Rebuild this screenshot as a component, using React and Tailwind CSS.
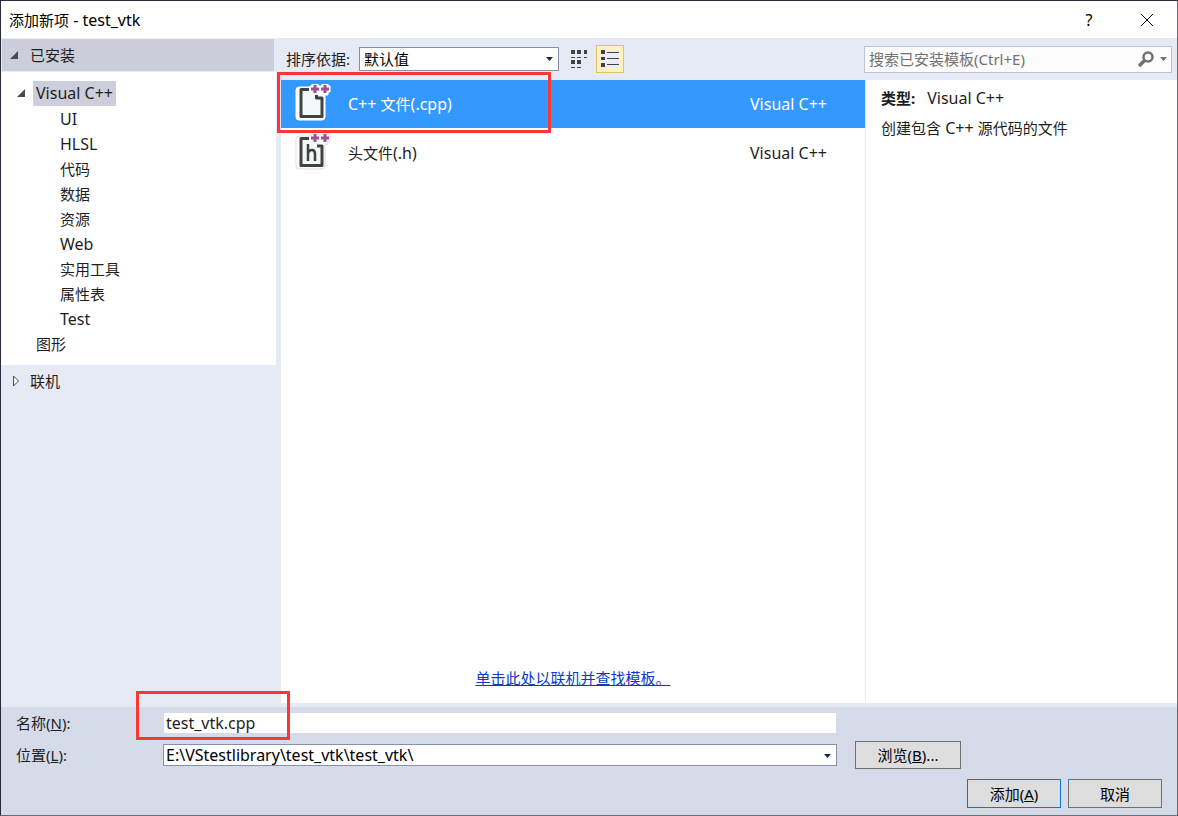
import React, { useState } from "react";

const categories = [
  "UI",
  "HLSL",
  "代码",
  "数据",
  "资源",
  "Web",
  "实用工具",
  "属性表",
  "Test",
];

const templates = [
  { id: "cpp", name: "C++ 文件(.cpp)", language: "Visual C++" },
  { id: "h", name: "头文件(.h)", language: "Visual C++" },
];

// Latin runs are set one size larger than the Chinese text around them
function Mixed({ children }) {
  return children.split(/([\x20-\x7e]+)/).map((part, i) =>
    i % 2 ? (
      <span key={i} className="text-[16px]">
        {part}
      </span>
    ) : (
      part
    )
  );
}

function ExpandedArrow() {
  return (
    <svg className="size-2 shrink-0" viewBox="0 0 8 8">
      <path d="M8 0V8H0Z" fill="#4a4a4e" />
    </svg>
  );
}

function DownArrow({ className }) {
  return (
    <svg className={className} viewBox="0 0 7 4">
      <path d="M0 0H7L3.5 4Z" fill="currentColor" />
    </svg>
  );
}

function FileIcon({ header }) {
  return (
    <svg className="h-10 w-9 shrink-0" viewBox="0 0 36 40">
      {/* light halo around the page and the plus signs */}
      <path
        d="M4 3H15V2H17V0H23V2H27V0H33V2H35V8H33V11H30V33Q30 36 27 36H4Q1 36 1 33V6Q1 3 4 3Z"
        fill="#fff"
        stroke={header ? "#dedede" : "#fff"}
      />
      <path d="M6 6H18L27 13V32H6Z" fill="#f4f7f7" />
      <path
        d={header ? "M14 5.5H6V32.5H27V13H22" : "M14 5.5H6V32.5H27V14H21.5V11"}
        fill="none"
        stroke="#424242"
        strokeWidth="3"
        strokeLinejoin="round"
      />
      {header && (
        <path
          d="M13 11V28M13 20Q14 17 17 17Q20 17 20 21V28"
          fill="none"
          stroke="#424242"
          strokeWidth="2.5"
        />
      )}
      <path
        d="M20 1V9M16 5H24M30 1V9M26 5H34"
        stroke="#9b4f96"
        strokeWidth="3"
      />
    </svg>
  );
}

export default function App() {
  const [selected, setSelected] = useState("cpp");
  const [fileName, setFileName] = useState("test_vtk.cpp");

  return (
    <div
      className="flex min-h-screen flex-col border border-[#6b6b70] border-t-[#292a3a] border-l-[#292a3a] bg-[#e6eaf5] text-[15px] leading-5 text-[#1e1e1e]"
      style={{ fontFamily: '"Noto Sans", "Noto Sans CJK SC", sans-serif' }}
    >
      {/* Title bar */}
      <header className="flex h-[37px] items-center justify-between bg-white pl-2 text-black">
        <h1>
          <Mixed>添加新项 - test_vtk</Mixed>
        </h1>
        <div className="flex">
          <button type="button" aria-label="帮助" className="w-14 text-base">
            ?
          </button>
          <button
            type="button"
            aria-label="关闭"
            className="flex w-[60px] items-center justify-center"
          >
            <svg className="size-3" viewBox="0 0 12 12">
              <path d="M0 0L12 12M12 0L0 12" stroke="#000" fill="none" />
            </svg>
          </button>
        </div>
      </header>

      <div className="flex flex-1">
        {/* Category tree */}
        <nav className="w-[280px] shrink-0 pr-[5px]">
          <button
            type="button"
            className="mt-px ml-px flex h-8 w-[272px] items-center gap-3 bg-[#cccedb] pl-2"
          >
            <ExpandedArrow />
            已安装
          </button>
          <div className="mt-px bg-white pt-2 pb-[9px]">
            <button type="button" className="flex h-[26px] items-center gap-2 pl-4">
              <ExpandedArrow />
              <span className="h-[25px] bg-[#cccedb] px-[3px] text-[16px] leading-[25px]">
                Visual C++
              </span>
            </button>
            <ul>
              {categories.map((category) => (
                <li key={category}>
                  <button type="button" className="block h-[25px] pl-[59px]">
                    <Mixed>{category}</Mixed>
                  </button>
                </li>
              ))}
            </ul>
            <button type="button" className="block h-[25px] pl-[35px]">
              图形
            </button>
          </div>
          <button type="button" className="flex h-8 items-center gap-[11px] pl-3">
            <svg className="h-3 w-[6px]" viewBox="0 0 6 12">
              <path d="M.5 1V11L5.5 6Z" fill="#fff" stroke="#4a4a4e" />
            </svg>
            联机
          </button>
        </nav>

        <div className="flex min-w-0 flex-1 flex-col pb-1">
          {/* Toolbar */}
          <div className="flex h-[42px] items-center pr-[5px] pl-[5px]">
            <label htmlFor="sort" className="w-[73px]">
              排序依据:
            </label>
            <div className="relative w-[200px]">
              <select
                id="sort"
                className="block h-6 w-full appearance-none border border-[#8591a9] bg-white pl-1 text-black"
              >
                <option>默认值</option>
              </select>
              <DownArrow className="pointer-events-none absolute top-[10px] right-[6px] h-1 w-[7px] text-[#1b293e]" />
            </div>
            <button
              type="button"
              aria-label="小图标"
              className="ml-1.5 flex size-7 items-center justify-center"
            >
              <svg className="size-[18px]" viewBox="0 0 18 18" fill="#424242">
                <path d="M1 0H5V4H1ZM7 0H11V4H7ZM14 0H17V4H14ZM1 7H5V8H1ZM7 7H11V8H7ZM14 7H17V8H14ZM1 10H5V14H1ZM7 10H11V14H7ZM1 17H5V18H1ZM7 17H11V18H7Z" />
              </svg>
            </button>
            <button
              type="button"
              aria-label="列表"
              className="ml-[3px] flex size-7 items-center justify-center border border-[#e5c365] bg-[#fff2be]"
            >
              <svg className="size-[18px]" viewBox="0 0 18 18" fill="#424242">
                <path d="M0 0H18V18H0Z" fill="#e9ecf2" />
                <path d="M0 0H4V4H0ZM6 2H18V3H6ZM0 7H4V10H0ZM6 8H18V9H6ZM0 13H4V17H0ZM6 14H18V15H6Z" />
              </svg>
            </button>
            <div className="ml-auto flex h-[27px] w-[308px] items-center border border-[#bdc4d6] bg-[#fcfcfc] pl-1">
              <input
                type="text"
                aria-label="搜索已安装模板"
                placeholder="搜索已安装模板(Ctrl+E)"
                className="min-w-0 flex-1 outline-none placeholder:text-[#717171]"
              />
              <button
                type="button"
                aria-label="搜索"
                className="mr-1 flex items-center gap-1.5 text-[#717171]"
              >
                <svg className="size-4" viewBox="0 0 16 16" fill="none" stroke="currentColor">
                  <circle cx="10" cy="6" r="4.5" strokeWidth="2.5" />
                  <path d="M7 9L1 15" strokeWidth="3.5" />
                </svg>
                <DownArrow className="h-1 w-[7px]" />
              </button>
            </div>
          </div>

          <div className="flex flex-1 bg-white">
            {/* Templates */}
            <main className="relative flex min-w-0 flex-1 flex-col gap-px">
              {templates.map((template) => (
                <button
                  key={template.id}
                  type="button"
                  onClick={() => setSelected(template.id)}
                  className={`flex h-12 items-center pl-[14px] text-left ${
                    selected === template.id ? "bg-[#3399ff] text-white" : ""
                  }`}
                >
                  <FileIcon header={template.id === "h"} />
                  <span className="ml-[17px] flex-1">
                    <Mixed>{template.name}</Mixed>
                  </span>
                  <span className="w-[115px] text-[16px]">
                    {template.language}
                  </span>
                </button>
              ))}
              <div className="pointer-events-none absolute -top-2 -left-1 h-[61px] w-[274px] border-3 border-[#fc3535]" />
              <a
                href="#online"
                className="mx-auto mt-auto mb-[15px] text-[#0e38c8] underline"
              >
                单击此处以联机并查找模板。
              </a>
            </main>

            {/* Details */}
            <aside className="w-[312px] shrink-0 border-l border-[#e6eaf5] px-[15px] pt-2">
              <p>
                <strong className="mr-3">类型:</strong>
                <Mixed>Visual C++</Mixed>
              </p>
              <p className="mt-[10px]">
                <Mixed>创建包含 C++ 源代码的文件</Mixed>
              </p>
            </aside>
          </div>
        </div>
      </div>

      {/* Name, location and actions */}
      <footer className="bg-[#d6dbe9] pt-1.5 pr-[15px] pb-[7px] pl-[15px]">
        <div className="relative mr-[326px] flex h-5 items-center">
          <label htmlFor="name" className="w-[148px]">
            名称(<u>N</u>):
          </label>
          <input
            id="name"
            type="text"
            value={fileName}
            onChange={(e) => setFileName(e.target.value)}
            className="h-5 min-w-0 flex-1 bg-white pl-0.5 text-[16px] outline-none"
          />
          <div className="pointer-events-none absolute -top-[22px] left-[120px] h-[49px] w-[154px] border-3 border-[#fc3535]" />
        </div>
        <div className="mt-2 mr-[201px] flex h-7 items-center">
          <label htmlFor="location" className="w-[147px]">
            位置(<u>L</u>):
          </label>
          <div className="relative flex-1">
            <select
              id="location"
              className="block h-[22px] w-full appearance-none border border-[#8591a9] bg-white pl-0.5 text-[16px] leading-5 text-black"
            >
              <option>E:\VStestlibrary\test_vtk\test_vtk\</option>
            </select>
            <DownArrow className="pointer-events-none absolute top-[10px] right-[6px] h-1 w-[7px] text-[#1b293e]" />
          </div>
          <button
            type="button"
            className="ml-[18px] h-7 w-[106px] border border-[#707070] bg-[#dddddd] text-black"
          >
            浏览(<u>B</u>)...
          </button>
        </div>
        <div className="mt-[10px] flex justify-end gap-[7px] text-black">
          <button
            type="button"
            className="h-[29px] w-[94px] border border-[#0078d7] bg-[#dddddd]"
          >
            添加(<u>A</u>)
          </button>
          <button
            type="button"
            className="h-[29px] w-[94px] border border-[#707070] bg-[#dddddd]"
          >
            取消
          </button>
        </div>
      </footer>
    </div>
  );
}
